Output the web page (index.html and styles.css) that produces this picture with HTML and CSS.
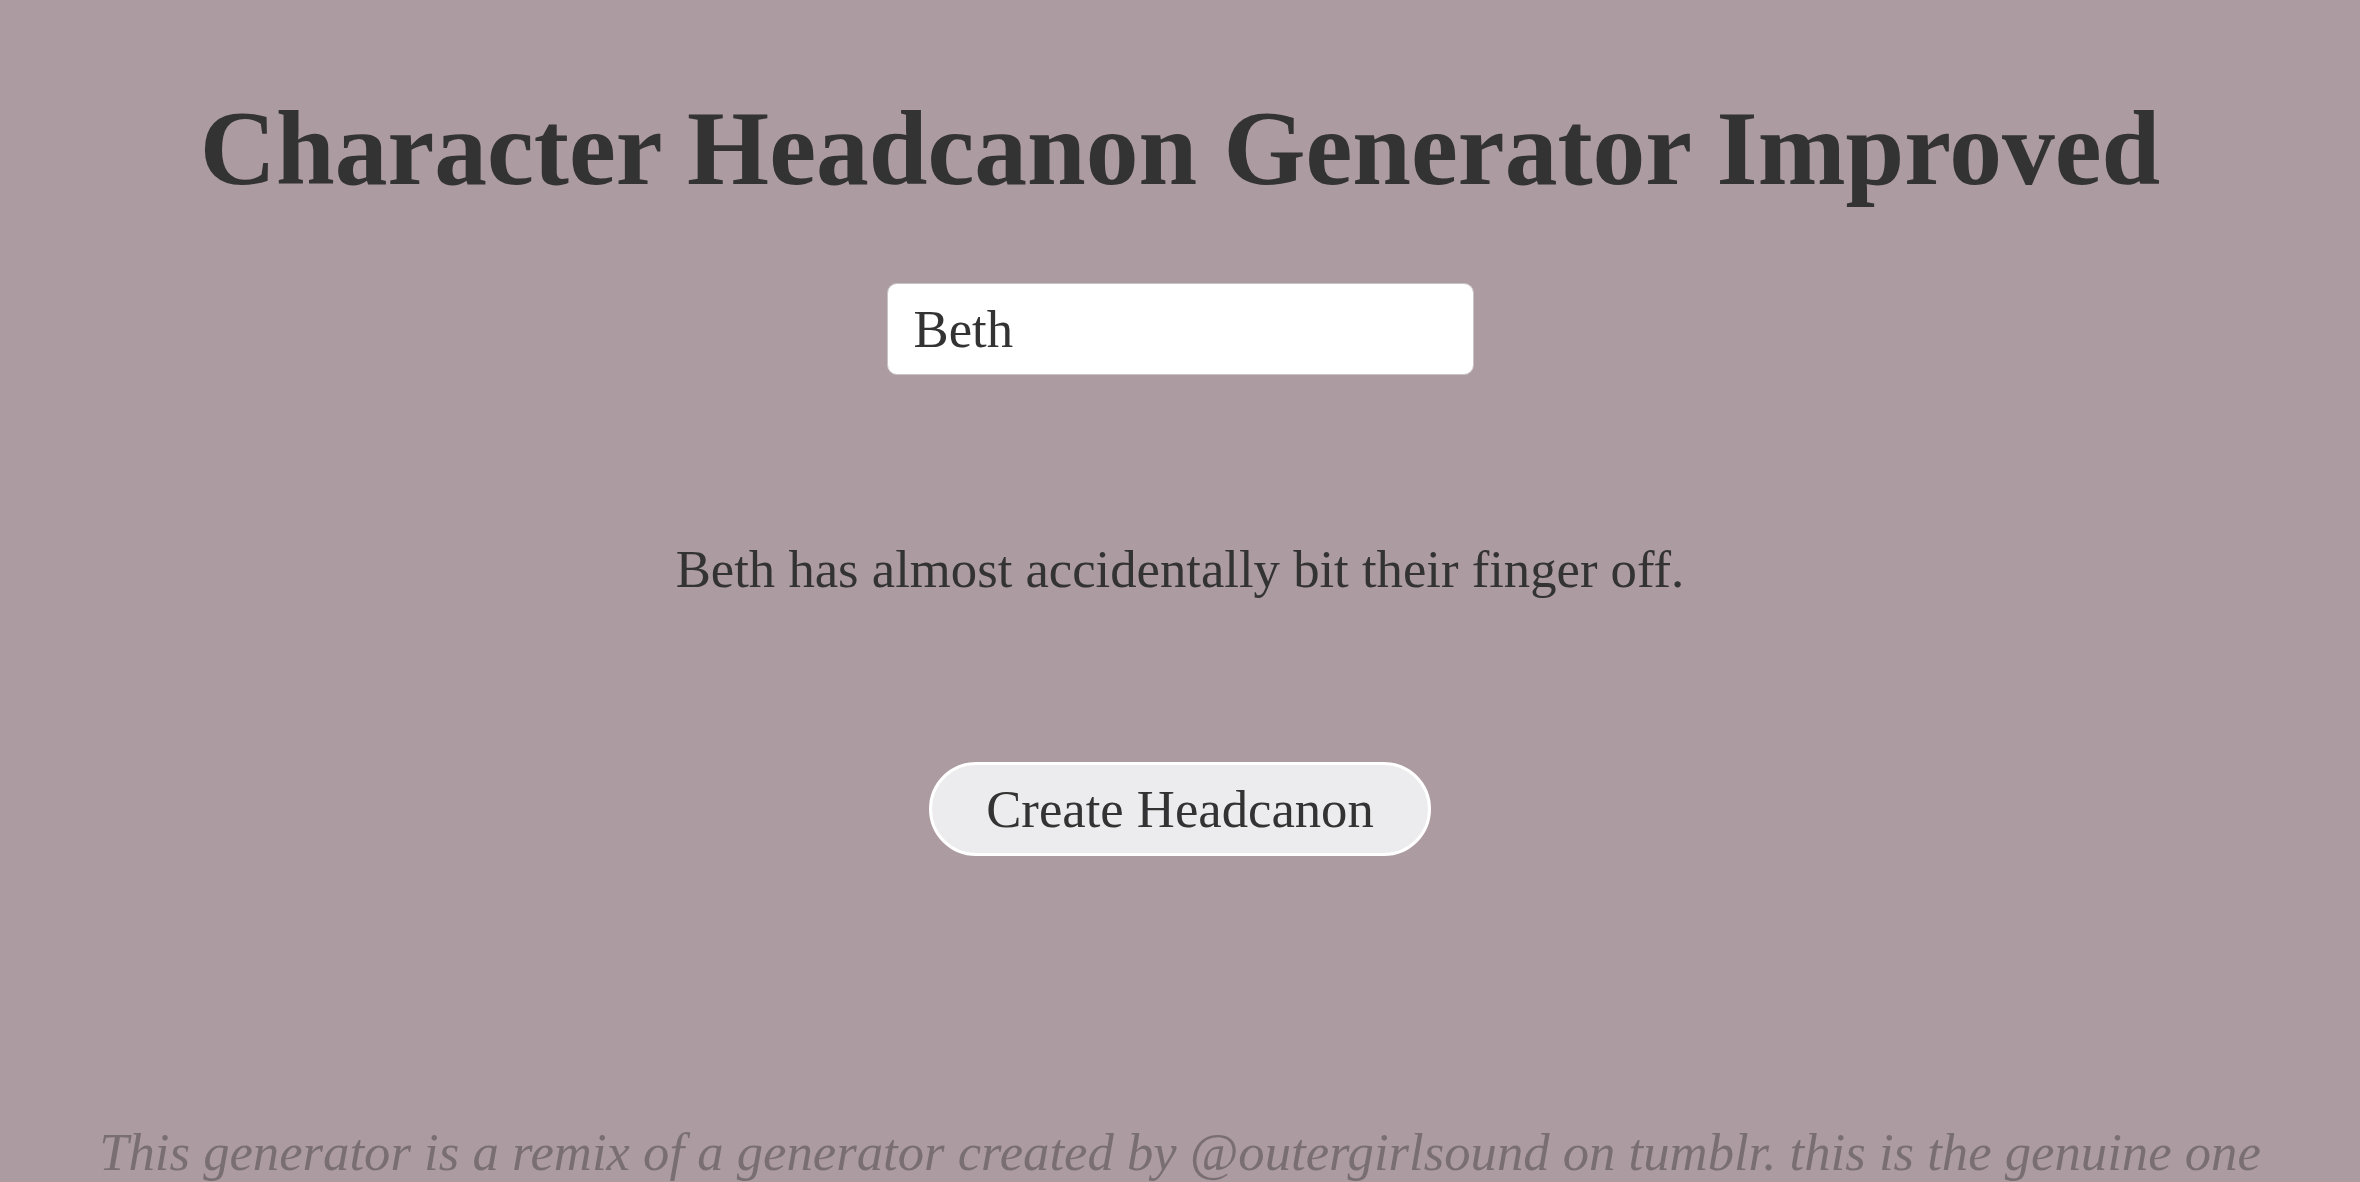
FILE: index.html
```html
<!DOCTYPE html>
<html>
<head>
  <meta charset="utf-8">
  <meta name="viewport" content="width=device-width">
  <title>Character Headcanon Generator Improved</title>
  <link rel="stylesheet" href="styles.css">
</head>
<body>
  <main class="generator">
    <h1 class="title">Character Headcanon Generator Improved</h1>
    <input type="text" class="name-input" id="name" value="Beth">
    <p class="result" id="result">Beth has almost accidentally bit their finger off.</p>
    <button class="create-btn" type="button" onclick="makeHeadcanon()">Create Headcanon</button>
    <p class="credit">This generator is a remix of a generator created by @outergirlsound on tumblr. this is the genuine one</p>
  </main>

  <script>
    const headcanons = [
      "has almost accidentally bit their finger off.",
      "hums when they are nervous.",
      "can't whistle no matter how hard they try.",
      "sleeps with at least three pillows."
    ];

    function makeHeadcanon() {
      const name = document.getElementById("name").value || "Someone";
      const pick = headcanons[Math.floor(Math.random() * headcanons.length)];
      document.getElementById("result").textContent = name + " " + pick;
    }
  </script>
</body>
</html>
```

FILE: styles.css
```css
:root {
  --bg-color: #ac9ba0;
  --text-color: #333333;
}

html, body {
  margin: 0;
  height: 100%;
  overflow: hidden;
}

body {
  background-color: var(--bg-color);
  color: var(--text-color);
  font-family: "Liberation Serif", "Times New Roman", serif;
  font-size: 52.7px;
}

.generator {
  display: flex;
  flex-direction: column;
  align-items: center;
  padding-top: 88px;
}

.title {
  margin: 0;
  font-size: 105.5px;
  line-height: 122px;
  font-weight: bold;
  text-align: center;
  white-space: nowrap;
}

.name-input {
  margin-top: 73px;
  width: 587px;
  height: 92px;
  box-sizing: border-box;
  padding: 0 26px;
  border: 1px solid #c9c4c6;
  border-radius: 10px;
  background: #ffffff;
  color: var(--text-color);
  font-family: inherit;
  font-size: 52.7px;
  outline: none;
}

.result {
  margin: 164px 0 0;
  line-height: 60px;
  text-align: center;
}

.create-btn {
  margin-top: 163px;
  width: 502px;
  height: 94px;
  box-sizing: border-box;
  padding: 0;
  border: 3px solid #ffffff;
  border-radius: 47px;
  background-color: #ececee;
  color: var(--text-color);
  font-family: inherit;
  font-size: 52.7px;
  cursor: pointer;
}

.credit {
  margin: 266px 0 0;
  line-height: 60px;
  font-style: italic;
  text-align: center;
  white-space: nowrap;
  color: rgba(51, 51, 51, 0.42);
}
```
